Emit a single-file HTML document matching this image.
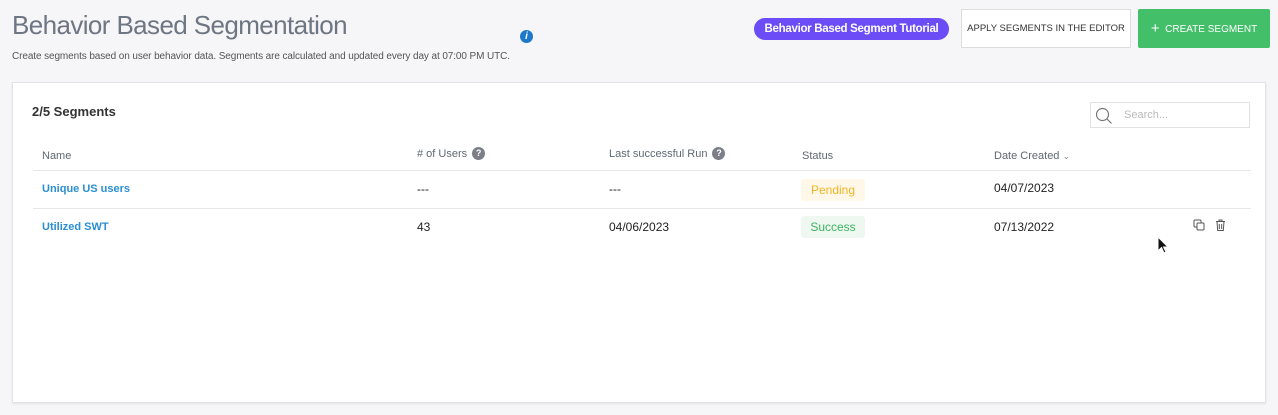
<!DOCTYPE html>
<html><head><style>
*{box-sizing:border-box;margin:0;padding:0}
body{width:1278px;height:415px;background:#f6f5f8;font-family:"Liberation Sans",sans-serif;position:relative;overflow:hidden;color:#333}
.a{position:absolute;white-space:nowrap}
h1{position:absolute;left:12px;top:10px;font-size:26px;font-weight:300;color:#6d7682;letter-spacing:-0.6px}
.card{position:absolute;left:12px;top:82px;width:1254px;height:321px;background:#fff;border:1px solid #e2e2e5;box-shadow:0 1px 2px rgba(0,0,0,.08)}
.line{position:absolute;left:20px;width:1218px;height:1px;background:#e6e7ea}
.th{font-size:11px;color:#5f6872}
.q{display:inline-block;width:13px;height:13px;border-radius:50%;background:#7b8088;color:#fff;font-size:9px;font-weight:bold;text-align:center;line-height:13px;vertical-align:1px;margin-left:5px}
.lnk{font-size:11px;color:#2a8fd0;font-weight:bold}
.td{font-size:12px;color:#222}
.pill{font-size:12px;padding:4px 0;width:64px;text-align:center;border-radius:3px}
</style></head><body>
<h1>Behavior Based Segmentation</h1>
<div class="a" style="left:520px;top:30px;width:13px;height:13px;border-radius:50%;background:#1e78c9;color:#fff;font-size:10px;font-weight:bold;font-style:italic;text-align:center;line-height:13px">i</div>
<div class="a" style="left:12px;top:51px;font-size:10px;color:#555;letter-spacing:-0.1px">Create segments based on user behavior data. Segments are calculated and updated every day at 07:00 PM UTC.</div>
<div class="a" style="left:754px;top:18px;width:195px;height:22px;border-radius:11px;background:#6c4cf7;color:#fff;font-size:11.5px;font-weight:bold;text-align:center;line-height:22px;letter-spacing:-0.3px">Behavior Based Segment Tutorial</div>
<div class="a" style="left:961px;top:9px;width:170px;height:39px;background:#fff;border:1px solid #ddd;font-size:9.5px;color:#333;text-align:center;line-height:37px">APPLY SEGMENTS IN THE EDITOR</div>
<div class="a" style="left:1138px;top:9px;width:132px;height:39px;background:#43be69;border-radius:2px;font-size:10px;color:#fff;text-align:center;line-height:39px"><span style="font-size:15px;vertical-align:-1px">+</span>&nbsp; CREATE SEGMENT</div>
<div class="card">
<div class="a" style="left:19px;top:21px;font-size:13px;font-weight:bold;color:#333">2/5 Segments</div>
<div class="a" style="left:1077px;top:19px;width:160px;height:26px;border:1px solid #e2e2e5;">
<svg style="position:absolute;left:4px;top:4px" width="18" height="18" viewBox="0 0 18 18"><circle cx="7.5" cy="7.5" r="6" fill="none" stroke="#777" stroke-width="1.2"/><line x1="12" y1="12" x2="16.5" y2="16.5" stroke="#777" stroke-width="1.2"/></svg>
<span class="a" style="left:33px;top:6px;font-size:11px;color:#bbb">Search...</span></div>
<div class="a th" style="left:29px;top:67px">Name</div>
<div class="a th" style="left:404px;top:64px"># of Users<span class="q">?</span></div>
<div class="a th" style="left:596px;top:64px">Last successful Run<span class="q">?</span></div>
<div class="a th" style="left:789px;top:67px">Status</div>
<div class="a th" style="left:981px;top:67px">Date Created <span style="font-size:9px;color:#888">&#8964;</span></div>
<div class="line" style="top:87px"></div>
<div class="line" style="top:125px"></div>
<div class="a lnk" style="left:29px;top:100px">Unique US users</div>
<div class="a td" style="left:404px;top:99px">---</div>
<div class="a td" style="left:596px;top:99px">---</div>
<div class="a pill" style="left:788px;top:96px;background:#fff8e8;color:#f3b323">Pending</div>
<div class="a td" style="left:981px;top:98px">04/07/2023</div>
<div class="a lnk" style="left:29px;top:138px">Utilized SWT</div>
<div class="a td" style="left:404px;top:137px">43</div>
<div class="a td" style="left:596px;top:137px">04/06/2023</div>
<div class="a pill" style="left:788px;top:133px;background:#eef8f1;color:#3cb460">Success</div>
<div class="a td" style="left:981px;top:137px">07/13/2022</div>
<svg class="a" style="left:1180px;top:136px" width="12" height="12" viewBox="0 0 12 12"><rect x="1" y="1" width="7" height="7" rx="1" fill="none" stroke="#555"/><rect x="4" y="4" width="7" height="7" rx="1" fill="#fff" stroke="#555"/></svg>
<svg class="a" style="left:1202px;top:136px" width="11" height="12" viewBox="0 0 11 12"><path d="M1 2.5h9M4 2.5V1h3v1.5M2 2.5l.7 9h5.6l.7-9M4.3 5v5M6.7 5v5" fill="none" stroke="#555"/></svg>
<svg class="a" style="left:1144px;top:153px" width="12" height="18" viewBox="0 0 12 18"><path d="M1 1v14l3.5-3.5 2.5 5.5 2-1-2.5-5H11z" fill="#111" stroke="#fff" stroke-width="1"/></svg>
</div>
</body></html>
